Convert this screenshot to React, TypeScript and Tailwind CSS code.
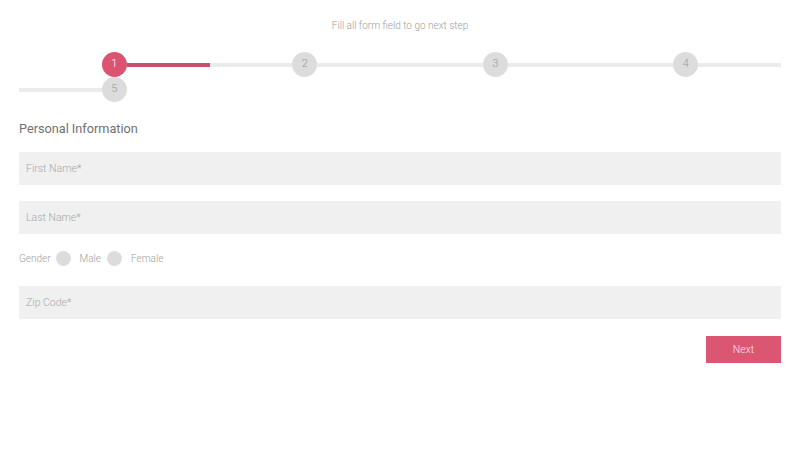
import React from "react"

const steps = [1, 2, 3, 4, 5]

function Step({ n, active, first, last }: { n: number; active: boolean; first: boolean; last: boolean }) {
  return (
    <div className="flex items-center">
      <div className={`h-1 flex-1 ${first ? "" : "bg-[#ebebeb]"}`} />
      <div
        className={`flex h-[25px] w-[25px] shrink-0 items-center justify-center rounded-full text-[11px] ${
          active ? "bg-[#db5370] text-white" : "bg-[#dcdcdc] text-[#9a9a9a]"
        }`}
      >
        {n}
      </div>
      <div className={`h-1 flex-1 ${last ? "" : active ? "bg-[#c9506a]" : "bg-[#ebebeb]"}`} />
    </div>
  )
}

function Field({ label }: { label: string }) {
  return (
    <input
      placeholder={label}
      className="h-[33px] w-full bg-[#f0f0f0] px-[7px] text-[10.5px] text-[#555] outline-none placeholder:text-[#a8a8a8]"
    />
  )
}

export default function App() {
  return (
    <div className="h-[450px] w-[800px] bg-white font-['Roboto',sans-serif] font-light">
      <div className="px-[19px]">
        <p className="pt-[19px] text-center text-[10px] leading-[14px] text-[#9c9c9c]">Fill all form field to go next step</p>
        <div className="mt-[19px] grid grid-cols-4">
          {steps.map((n, i) => (
            <Step key={n} n={n} active={i === 0} first={i === 0} last={i === steps.length - 1} />
          ))}
        </div>
        <h2 className="mt-[19px] text-[12.7px] font-normal leading-[16px] text-[#707070]">Personal Information</h2>
        <div className="mt-[15px] flex flex-col gap-4">
          <Field label="First Name*" />
          <Field label="Last Name*" />
        </div>
        <div className="mt-[16px] flex h-[16px] items-center text-[10px] text-[#a0a0a0]">
          <span>Gender</span>
          <span className="ml-[5px] h-[15px] w-[15px] rounded-full bg-[#dcdcdc]" />
          <span className="ml-[9px]">Male</span>
          <span className="ml-[6px] h-[15px] w-[15px] rounded-full bg-[#dcdcdc]" />
          <span className="ml-[9px]">Female</span>
        </div>
        <div className="mt-[20px]">
          <Field label="Zip Code*" />
        </div>
        <div className="mt-[17px] flex justify-end">
          <button className="h-[27px] w-[75px] bg-[#db5672] text-[10.5px] text-[#fde6ea]">Next</button>
        </div>
      </div>
    </div>
  )
}
